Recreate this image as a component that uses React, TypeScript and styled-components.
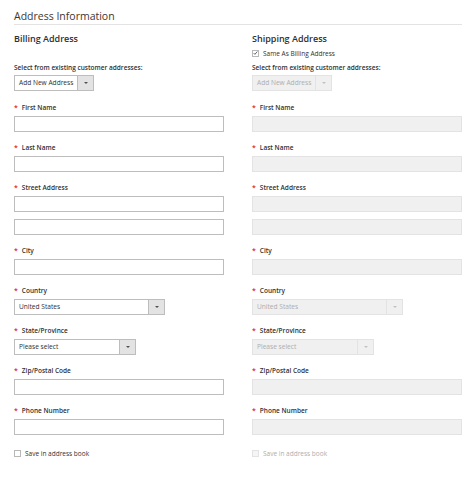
import styled, { createGlobalStyle } from "styled-components";

const GlobalStyle = createGlobalStyle`
  body {
    margin: 0;
    background: #ffffff;
    font-family: "Open Sans", "Liberation Sans", sans-serif;
    color: #303030;
  }
  * {
    box-sizing: border-box;
  }
`;

const Page = styled.div`
  width: 474px;
  padding: 0 12px 0 14px;
`;

const SectionTitle = styled.h2`
  margin: 0;
  padding-top: 9px;
  font-size: 10.5px;
  line-height: 14px;
  font-weight: 400;
  color: #41362f;
  border-bottom: 1px solid #e3e3e3;
  height: 25px;
  padding-bottom: 2px;
`;

const Columns = styled.div`
  display: grid;
  grid-template-columns: 210px 210px;
  column-gap: 28px;
`;

const Column = styled.div`
  display: flex;
  flex-direction: column;
`;

const Heading = styled.h3<{ $after: number }>`
  margin: 7px 0 ${(p) => p.$after}px;
  font-size: 9px;
  line-height: 14px;
  font-weight: 600;
  color: #303030;
`;

const CheckRow = styled.label<{ $disabled?: boolean }>`
  display: flex;
  align-items: center;
  gap: 4px;
  height: 10px;
  font-size: 6.5px;
  color: ${(p) => (p.$disabled ? "#adadad" : "#303030")};
`;

const Box = styled.span<{ $disabled?: boolean }>`
  width: 7px;
  height: 7px;
  border: 1px solid ${(p) => (p.$disabled ? "#e3e3e3" : "#b8b8b8")};
  background: ${(p) => (p.$disabled ? "#f5f5f5" : "#fff")};
  display: flex;
  align-items: center;
  justify-content: center;
`;

const SmallLabel = styled.div<{ $top?: number }>`
  margin-top: ${(p) => p.$top ?? 0}px;
  margin-bottom: 2px;
  font-size: 6.5px;
  line-height: 10px;
  font-weight: 600;
  color: #303030;
`;

const Field = styled.div`
  margin-top: 12px;
  & + & {
    margin-top: 11px;
  }
`;

const Label = styled.div`
  font-size: 6.5px;
  line-height: 10px;
  font-weight: 600;
  color: #303030;
  height: 10px;
  margin-bottom: 3px;
  &::before {
    content: "*";
    color: #e22626;
    margin-right: 4px;
    font-size: 7px;
  }
`;

const Input = styled.div<{ $disabled?: boolean }>`
  height: 16px;
  border: 1px solid ${(p) => (p.$disabled ? "#e3e3e3" : "#bdbdbd")};
  background: ${(p) => (p.$disabled ? "#f0f0f0" : "#ffffff")};
  & + & {
    margin-top: 7px;
  }
`;

const Select = styled.div<{ $width: number; $disabled?: boolean }>`
  width: ${(p) => p.$width}px;
  height: 16px;
  display: flex;
  border: 1px solid ${(p) => (p.$disabled ? "#e3e3e3" : "#bdbdbd")};
  background: ${(p) => (p.$disabled ? "#f0f0f0" : "#ffffff")};
  font-size: 6.6px;
  color: ${(p) => (p.$disabled ? "#adadad" : "#303030")};
`;

const SelectText = styled.span`
  flex: 1;
  padding-left: 4px;
  line-height: 14px;
  white-space: nowrap;
  overflow: hidden;
`;

const SelectArrow = styled.span<{ $disabled?: boolean }>`
  width: 16px;
  border-left: 1px solid ${(p) => (p.$disabled ? "#e3e3e3" : "#bdbdbd")};
  background: ${(p) => (p.$disabled ? "#f0f0f0" : "#e3e3e3")};
  display: flex;
  align-items: center;
  justify-content: center;
  &::after {
    content: "";
    border-left: 2px solid transparent;
    border-right: 2px solid transparent;
    border-top: 2.5px solid ${(p) => (p.$disabled ? "#c2c2c2" : "#505050")};
  }
`;

const SaveRow = styled.div`
  margin-top: 13px;
`;

const fields = [
  { label: "First Name", kind: "input" },
  { label: "Last Name", kind: "input" },
  { label: "Street Address", kind: "street" },
  { label: "City", kind: "input" },
  { label: "Country", kind: "country" },
  { label: "State/Province", kind: "state" },
  { label: "Zip/Postal Code", kind: "input" },
  { label: "Phone Number", kind: "input" },
];

function Tick() {
  return (
    <svg width="6" height="6" viewBox="0 0 6 6">
      <path d="M0.8 3.1 L2.3 4.6 L5.2 1.2" fill="none" stroke="#303030" strokeWidth="0.9" />
    </svg>
  );
}

function AddressColumn({ shipping }: { shipping?: boolean }) {
  const d = !!shipping;
  return (
    <Column>
      <Heading $after={d ? 2 : 17}>{d ? "Shipping Address" : "Billing Address"}</Heading>
      {d ? (
        <CheckRow>
          <Box>
            <Tick />
          </Box>
          Same As Billing Address
        </CheckRow>
      ) : null}
      <SmallLabel $top={d ? 5 : 0}>Select from existing customer addresses:</SmallLabel>
      <Select $width={80} $disabled={d}>
        <SelectText>Add New Address</SelectText>
        <SelectArrow $disabled={d} />
      </Select>
      {fields.map((f) => (
        <Field key={f.label}>
          <Label>{f.label}</Label>
          {f.kind === "input" ? <Input $disabled={d} /> : null}
          {f.kind === "street" ? (
            <>
              <Input $disabled={d} />
              <Input $disabled={d} />
            </>
          ) : null}
          {f.kind === "country" ? (
            <Select $width={151} $disabled={d}>
              <SelectText>United States</SelectText>
              <SelectArrow $disabled={d} />
            </Select>
          ) : null}
          {f.kind === "state" ? (
            <Select $width={122} $disabled={d}>
              <SelectText>Please select</SelectText>
              <SelectArrow $disabled={d} />
            </Select>
          ) : null}
        </Field>
      ))}
      <SaveRow>
        <CheckRow $disabled={d}>
          <Box $disabled={d} />
          Save in address book
        </CheckRow>
      </SaveRow>
    </Column>
  );
}

export default function App() {
  return (
    <>
      <GlobalStyle />
      <Page>
        <SectionTitle>Address Information</SectionTitle>
        <Columns>
          <AddressColumn />
          <AddressColumn shipping />
        </Columns>
      </Page>
    </>
  );
}
